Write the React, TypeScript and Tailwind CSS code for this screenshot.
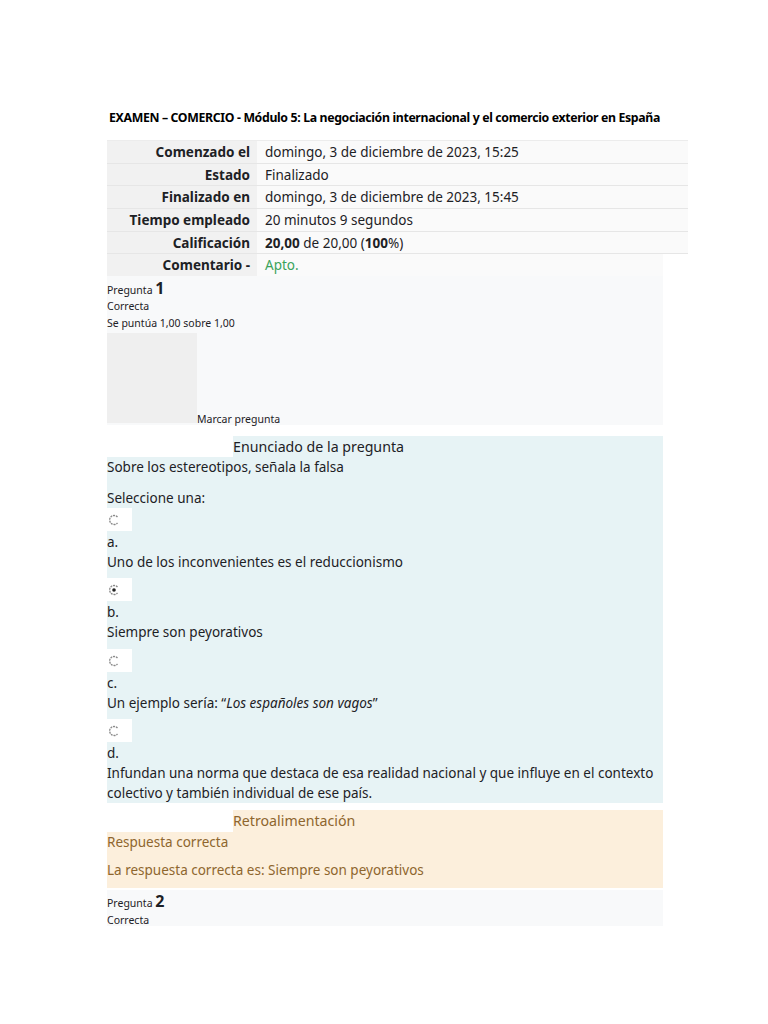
import React from "react";

function Radio({ checked }: { checked?: boolean }) {
  return (
    <div className="w-[25px] h-[23px] mb-[1px] bg-white flex items-center justify-start pl-[1px]">
      <svg width="12" height="12" viewBox="0 0 12 12">
        <path d="M9.5 3 A4.5 4.5 0 1 0 9.5 9" fill="none" stroke="#8a8a8a" strokeWidth="1.3" strokeDasharray="2 0.8" />
        {checked && <circle cx="6" cy="6" r="1.8" fill="#222" />}
      </svg>
    </div>
  );
}

const rows: [string, React.ReactNode][] = [
  ["Comenzado el", "domingo, 3 de diciembre de 2023, 15:25"],
  ["Estado", "Finalizado"],
  ["Finalizado en", "domingo, 3 de diciembre de 2023, 15:45"],
  ["Tiempo empleado", "20 minutos 9 segundos"],
  [
    "Calificación",
    <>
      <b>20,00</b> de 20,00 (<b>100</b>%)
    </>,
  ],
];

export default function App() {
  return (
    <div
      className="w-[768px] min-h-[1024px] bg-white text-[#1d2125] pt-[109px]"
      style={{ fontFamily: '"Noto Sans", "Open Sans", sans-serif' }}
    >
      <h1 className="text-[12.3px] font-bold text-center text-black tracking-[-0.35px] leading-[18px] pl-[1px]">
        EXAMEN – COMERCIO - Módulo 5: La negociación internacional y el comercio exterior en España
      </h1>
      <div className="ml-[107px] mt-[13px] w-[581px] text-[13.5px] leading-[22px]">
        <div className="border-t border-[#ececec]">
          {rows.map(([k, v]) => (
            <div key={k} className="flex border-b border-[#e6e6e6] h-[22.7px]">
              <div className="w-[150px] bg-[#f1f1f1] text-right pr-[7px] font-bold">{k}</div>
              <div className="flex-1 bg-[#fafafa] pl-[8px]">{v}</div>
            </div>
          ))}
          <div className="flex h-[22px]">
            <div className="w-[150px] bg-[#f1f1f1] text-right pr-[7px] font-bold">Comentario -</div>
            <div className="w-[406px] bg-[#fafafa] pl-[8px] text-[#3aa35a]">Apto.</div>
          </div>
        </div>
      </div>
      <div className="ml-[107px] w-[556px]">
        <div className="bg-[#f8f9fa] h-[149px] flex flex-col">
          <div className="text-[10.5px] leading-[16px] mt-[4px]">
            Pregunta <span className="text-[16px] font-bold">1</span>
          </div>
          <div className="text-[10.5px] leading-[17px]">Correcta</div>
          <div className="text-[10.5px] leading-[16px]">Se puntúa 1,00 sobre 1,00</div>
          <div className="flex items-end mt-[2px]">
            <div className="w-[90px] h-[90px] bg-[#efefef]" />
            <div className="text-[10.5px] leading-[8px]">Marcar pregunta</div>
          </div>
        </div>
        <div className="mt-[11px] flex">
          <div className="w-[126px] bg-white" />
          <div className="flex-1 bg-[#e7f3f5] text-[14.2px] leading-[21px] text-[#1d2125]">Enunciado de la pregunta</div>
        </div>
        <div className="bg-[#e7f3f5] text-[13.5px] leading-[20px]">
          <div>Sobre los estereotipos, señala la falsa</div>
          <div className="mt-[11px]">Seleccione una:</div>
          <Radio />
          <div>a.</div>
          <div>Uno de los inconvenientes es el reduccionismo</div>
          <div className="mt-[6px]"><Radio checked /></div>
          <div>b.</div>
          <div>Siempre son peyorativos</div>
          <div className="mt-[7px]"><Radio /></div>
          <div>c.</div>
          <div>
            Un ejemplo sería: “<i>Los españoles son vagos</i>”
          </div>
          <div className="mt-[6px]"><Radio /></div>
          <div>d.</div>
          <div className="whitespace-nowrap">
            Infundan una norma que destaca de esa realidad nacional y que influye en el contexto
            <br />
            colectivo y también individual de ese país.
          </div>
        </div>
        <div className="mt-[7px] flex">
          <div className="w-[126px] bg-white" />
          <div className="flex-1 bg-[#fcefdc] text-[14.2px] leading-[22px] text-[#8e662e]">Retroalimentación</div>
        </div>
        <div className="bg-[#fcefdc] text-[13.5px] leading-[20px] text-[#8e662e] pb-[8px]">
          <div>Respuesta correcta</div>
          <div className="mt-[8px]">La respuesta correcta es: Siempre son peyorativos</div>
        </div>
        <div className="mt-[2px] bg-[#f8f9fa] h-[36px]">
          <div className="text-[10.5px] leading-[16px] pt-[3px]">
            Pregunta <span className="text-[16px] font-bold">2</span>
          </div>
          <div className="text-[10.5px] leading-[18px]">Correcta</div>
        </div>
      </div>
    </div>
  );
}
